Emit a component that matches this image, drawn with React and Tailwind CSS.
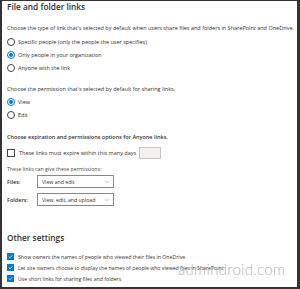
import React from "react";
import { ChevronDown } from "lucide-react";

function Radio({ checked, label }) {
  return (
    <div className="flex h-[13px] items-center">
      <span
        className={
          "flex h-[8px] w-[8px] items-center justify-center rounded-full border bg-white " +
          (checked ? "border-[#0078d4]" : "border-[#444]")
        }
      >
        {checked && <span className="h-[4px] w-[4px] rounded-full bg-[#0078d4]" />}
      </span>
      <span className="ml-[3px] text-[5.5px] leading-[8px] text-[#323130]">{label}</span>
    </div>
  );
}

function Checked({ label }) {
  return (
    <div className="flex h-[11px] items-center">
      <span className="flex h-[7px] w-[7px] items-center justify-center bg-[#0078d4]">
        <svg width="5" height="5" viewBox="0 0 10 10" fill="none">
          <path d="M1.5 5.2 L4 7.6 L8.6 2.6" stroke="white" strokeWidth="1.4" />
        </svg>
      </span>
      <span className="ml-[4px] text-[5.2px] leading-[8px] text-[#323130]">{label}</span>
    </div>
  );
}

function Select({ value }) {
  return (
    <div className="flex h-[13px] w-[77px] items-center justify-between border border-[#8a8886] bg-white pl-[4px] pr-[3px]">
      <span className="text-[5.2px] leading-[8px] text-[#323130]">{value}</span>
      <ChevronDown size={6} strokeWidth={1.5} className="text-[#605e5c]" />
    </div>
  );
}

export default function App() {
  return (
    <div
      className="relative h-[289px] w-[300px] overflow-hidden border-t border-b-2 border-l-2 border-r-[3px] border-[#333] bg-white pl-[5px] text-[#323130]"
      style={{ fontFamily: '"Open Sans", "Noto Sans", sans-serif' }}
    >
      <div className="h-[12px] text-[8.3px] font-semibold leading-[12px] text-[#323130]">File and folder links</div>

      <p className="mt-[11px] whitespace-nowrap text-[5.5px] leading-[8px]">
        Choose the type of link that's selected by default when users share files and folders in SharePoint and OneDrive.
      </p>
      <div className="mt-[3px]">
        <Radio label="Specific people (only the people the user specifies)" />
        <Radio checked label="Only people in your organization" />
        <Radio label="Anyone with the link" />
      </div>

      <p className="mt-[11px] text-[5.5px] leading-[8px]">Choose the permission that's selected by default for sharing links.</p>
      <div className="mt-[2px]">
        <Radio checked label="View" />
        <Radio label="Edit" />
      </div>

      <p className="mt-[12px] text-[5.5px] font-semibold leading-[8px]">
        Choose expiration and permissions options for Anyone links.
      </p>
      <div className="mt-[6px] flex h-[12px] items-center">
        <span className="h-[8px] w-[8px] border border-[#444] bg-white" />
        <span className="ml-[4px] text-[5.5px] leading-[8px]">These links must expire within this many days</span>
        <span className="ml-[3px] h-[12px] w-[22px] border border-[#c8c6c4] bg-[#f3f2f1]" />
      </div>

      <p className="mt-[6px] text-[5.2px] leading-[8px] text-[#484644]">These links can give these permissions:</p>
      <div className="mt-[2px] flex items-center">
        <span className="w-[30px] text-[5.5px] font-semibold leading-[8px]">Files:</span>
        <Select value="View and edit" />
      </div>
      <div className="mt-[5px] flex items-center">
        <span className="w-[30px] text-[5.5px] font-semibold leading-[8px]">Folders:</span>
        <Select value="View, edit, and upload" />
      </div>

      <div className="mt-[26px] h-[12px] text-[8.3px] font-semibold leading-[12px]">Other settings</div>
      <div className="mt-[7px]">
        <Checked label="Show owners the names of people who viewed their files in OneDrive" />
        <Checked label="Let site owners choose to display the names of people who viewed files in SharePoint" />
        <Checked label="Use short links for sharing files and folders" />
      </div>

      <div
        className="absolute left-[176px] top-[258px] text-[15px] font-light leading-[20px] tracking-[0.3px] text-[#b4b4b4]"
        style={{ fontFamily: "Lato, sans-serif" }}
      >
        admindroid.com
      </div>
    </div>
  );
}
